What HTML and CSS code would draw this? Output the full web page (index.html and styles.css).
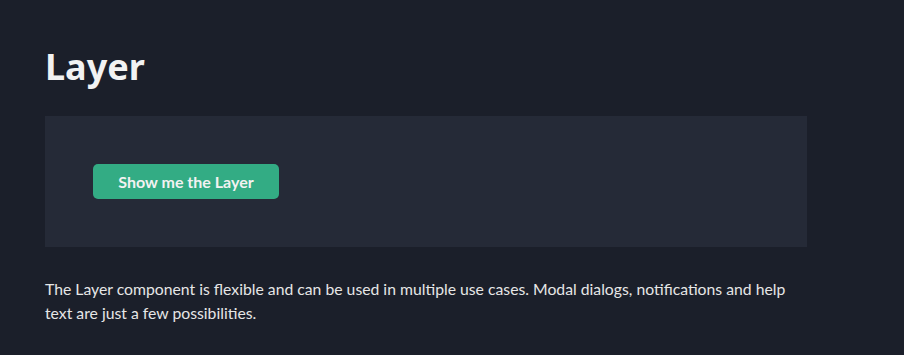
FILE: index.html
```html
<!DOCTYPE html>
<html>
<head>
<meta charset="utf-8">
<link rel="stylesheet" href="styles.css">
</head>
<body>
<main class="page">
  <h1 class="title">Layer</h1>
  <section class="demo">
    <button class="btn">Show me the Layer</button>
  </section>
  <p class="desc">The Layer component is flexible and can be used in multiple use cases. Modal dialogs, notifications and help text are just a few possibilities.</p>
</main>
</body>
</html>
```
FILE: styles.css
```css
html, body {
  margin: 0;
  padding: 0;
  background: #1b1f2a;
}
.page {
  padding: 40px 45px 0 45px;
  font-family: Lato, "Noto Sans", sans-serif;
  color: #e6e6e6;
}
.title {
  margin: 0 0 22px 0;
  font-family: "Noto Sans", Lato, sans-serif;
  font-size: 36px;
  line-height: 54px;
  font-weight: 700;
  color: #f2f2f2;
}
.demo {
  width: 762px;
  box-sizing: border-box;
  padding: 48px;
  background: #252a37;
}
.btn {
  display: block;
  height: 35px;
  width: 186px;
  border: none;
  border-radius: 5px;
  background: #33ac84;
  color: #f2f2f2;
  font-family: Lato, "Noto Sans", sans-serif;
  font-weight: 700;
  font-size: 16px;
  padding: 0;
}
.desc {
  margin: 30px 0 0 0;
  width: 760px;
  font-size: 15.75px;
  line-height: 24px;
  color: #e6e6e6;
}
```
